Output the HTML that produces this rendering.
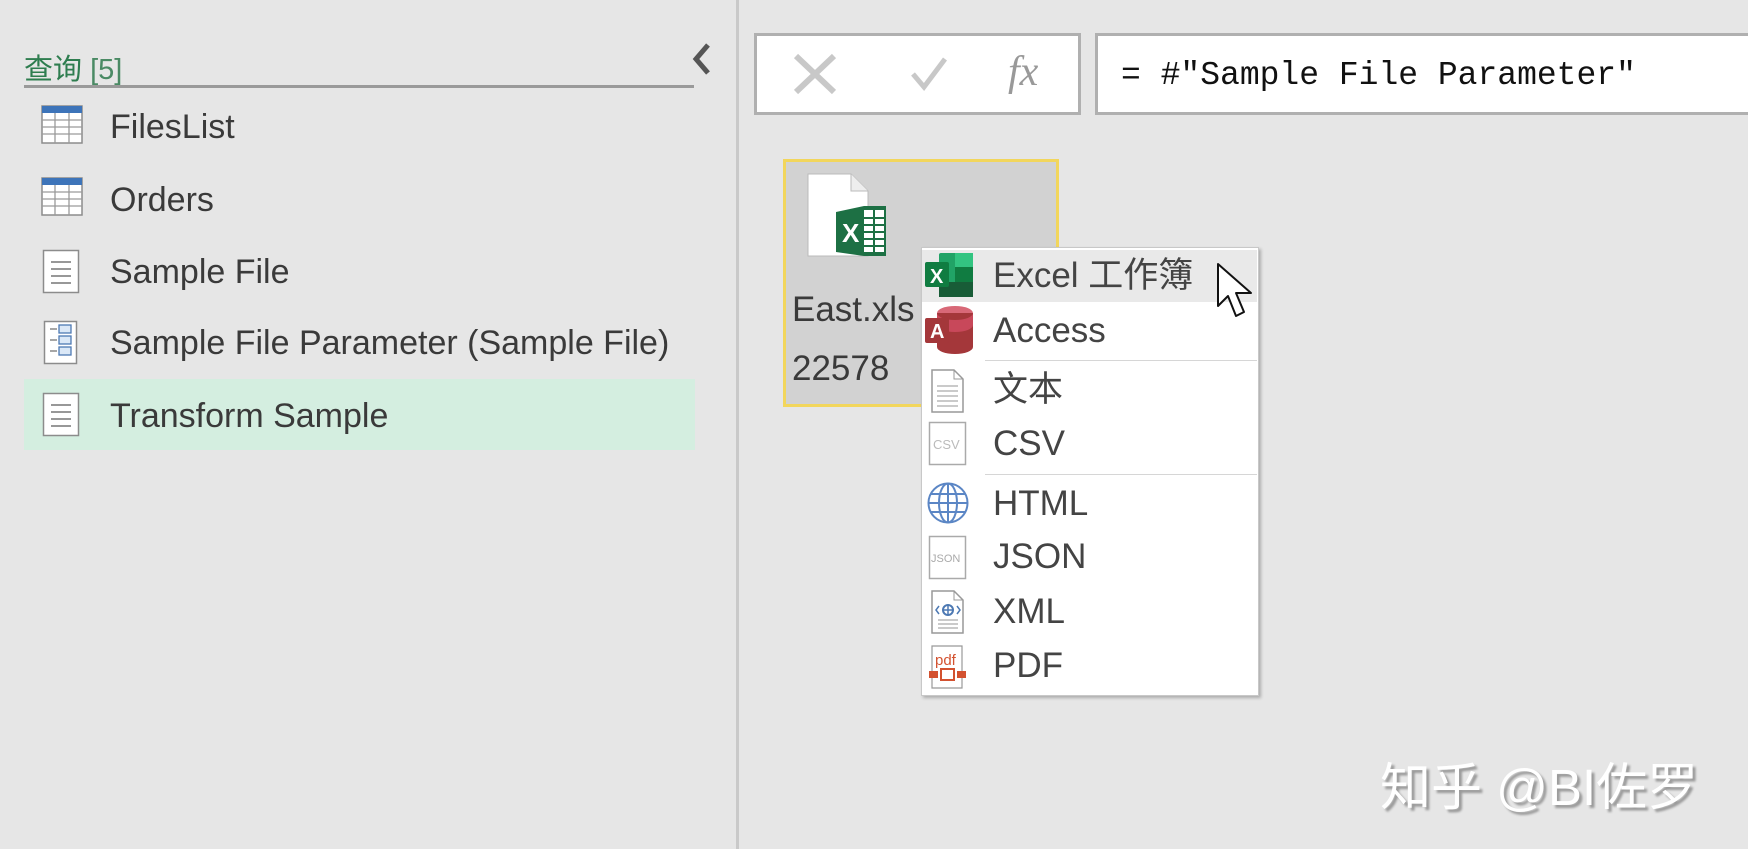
<!DOCTYPE html>
<html><head><meta charset="utf-8"><style>
*{margin:0;padding:0;box-sizing:border-box}
body{width:1748px;height:849px;background:#e6e6e6;position:relative;overflow:hidden;font-family:"Segoe UI","Liberation Sans","Noto Sans CJK SC",sans-serif;color:#3c3c3c}
.a{position:absolute}
.item{position:absolute;left:110px;font-size:34px;line-height:40px;white-space:nowrap;color:#3a3a3a}
.mi{position:absolute;left:993px;font-size:35px;line-height:40px;color:#444;white-space:nowrap}
</style></head><body>
<div class="a" style="left:24px;top:46px;font-size:29px;color:#2e7d4f;font-family:'Liberation Sans','Noto Sans CJK SC',sans-serif">查询 <span style="color:#4a8a64">[5]</span></div>
<div class="a" style="left:24px;top:85px;width:670px;height:3px;background:#9a9a9a"></div>
<svg class="a" style="left:690px;top:42px" width="24" height="34" viewBox="0 0 24 34"><path d="M18 3 L6 17 L18 31" stroke="#555" stroke-width="5" fill="none"/></svg>
<div class="a" style="left:736px;top:0;width:3px;height:849px;background:#c9c9c9"></div>
<div class="a" style="left:24px;top:379px;width:671px;height:71px;background:#d4eee0"></div>

<svg class="a" style="left:41px;top:105px" width="42" height="40" viewBox="0 0 42 40"><rect x="1" y="1" width="40" height="37" fill="#fff" stroke="#8c8c8c" stroke-width="1.5"/><rect x="1" y="1" width="40" height="7" fill="#3d74b9"/><path d="M1 15H41M1 22H41M1 29H41M14 8V38M28 8V38" stroke="#9a9a9a" stroke-width="1.3"/></svg>
<div class="item" style="top:107px">FilesList</div>
<svg class="a" style="left:41px;top:177px" width="42" height="40" viewBox="0 0 42 40"><rect x="1" y="1" width="40" height="37" fill="#fff" stroke="#8c8c8c" stroke-width="1.5"/><rect x="1" y="1" width="40" height="7" fill="#3d74b9"/><path d="M1 15H41M1 22H41M1 29H41M14 8V38M28 8V38" stroke="#9a9a9a" stroke-width="1.3"/></svg>
<div class="item" style="top:180px">Orders</div>
<svg class="a" style="left:42px;top:249px" width="38" height="46" viewBox="0 0 38 46"><rect x="1.5" y="1.5" width="35" height="42" fill="#fff" stroke="#8c8c8c" stroke-width="1.5"/><path d="M9 13H29M9 20H29M9 27H29M9 34H29" stroke="#777" stroke-width="1.5"/></svg>
<div class="item" style="top:252px">Sample File</div>
<svg class="a" style="left:43px;top:320px" width="36" height="46" viewBox="0 0 36 46"><rect x="1.5" y="1.5" width="32" height="42" fill="#fff" stroke="#8c8c8c" stroke-width="1.5"/><path d="M7 9H14M7 20H14M7 31H14" stroke="#888" stroke-width="1.5"/><rect x="16" y="5" width="12" height="8" fill="#dbe8f7" stroke="#4d79b3" stroke-width="1.3"/><rect x="16" y="16" width="12" height="8" fill="#dbe8f7" stroke="#4d79b3" stroke-width="1.3"/><rect x="16" y="27" width="12" height="8" fill="#dbe8f7" stroke="#4d79b3" stroke-width="1.3"/></svg>
<div class="item" style="top:323px">Sample File Parameter (Sample File)</div>
<svg class="a" style="left:42px;top:392px" width="38" height="46" viewBox="0 0 38 46"><rect x="1.5" y="1.5" width="35" height="42" fill="#fff" stroke="#8c8c8c" stroke-width="1.5"/><path d="M9 13H29M9 20H29M9 27H29M9 34H29" stroke="#777" stroke-width="1.5"/></svg>
<div class="item" style="top:396px">Transform Sample</div>

<div class="a" style="left:754px;top:33px;width:327px;height:82px;background:#fff;border:3px solid #b0b0b0"></div>
<svg class="a" style="left:792px;top:52px" width="46" height="44" viewBox="0 0 46 44"><path d="M4 4L42 40M42 4L4 40" stroke="#c8c8c8" stroke-width="6"/></svg>
<svg class="a" style="left:910px;top:54px" width="38" height="38" viewBox="0 0 38 38"><path d="M3 20L14 33L35 5" stroke="#c8c8c8" stroke-width="5" fill="none"/></svg>
<div class="a" style="left:1008px;top:48px;font-family:'Liberation Serif',serif;font-style:italic;font-size:42px;color:#999">fx</div>
<div class="a" style="left:1095px;top:33px;width:660px;height:82px;background:#fff;border:3px solid #b0b0b0"></div>
<div class="a" style="left:1121px;top:57px;font-family:'Liberation Mono',monospace;font-size:33px;color:#111;white-space:pre">= #"Sample File Parameter"</div>

<div class="a" style="left:783px;top:159px;width:276px;height:248px;background:#d2d2d2;border:3px solid #f2d65c"></div>
<svg class="a" style="left:806px;top:172px" width="84" height="92" viewBox="0 0 84 92"><path d="M2 2H45L62 19V84H2Z" fill="#fff" stroke="#bbb" stroke-width="1"/><path d="M45 2V19H62" fill="#eee" stroke="#bbb"/><path d="M30 40L58 34H80V84H58L30 80Z" fill="#1d7044"/><rect x="58" y="38" width="20" height="42" fill="#fff"/><path d="M58 46H78M58 53H78M58 60H78M58 67H78M58 74H78M68 38V80" stroke="#1d7044" stroke-width="2"/><text x="36" y="70" font-family="Liberation Sans" font-weight="bold" font-size="26" fill="#fff">X</text></svg>
<div class="a" style="left:792px;top:290px;font-size:35px;color:#3a3a3a">East.xls</div>
<div class="a" style="left:792px;top:349px;font-size:35px;color:#3a3a3a">22578 </div>

<div class="a" style="left:921px;top:247px;width:338px;height:449px;background:#fff;border:1px solid #c8c8c8;box-shadow:2px 2px 3px rgba(0,0,0,.25)"></div>
<div class="a" style="left:922px;top:250px;width:335px;height:52px;background:#e9e9e9"></div>
<div class="a" style="left:985px;top:360px;width:272px;height:1px;background:#d6d6d6"></div>
<div class="a" style="left:985px;top:474px;width:272px;height:1px;background:#d6d6d6"></div>

<svg class="a" style="left:925px;top:253px" width="48" height="44" viewBox="0 0 48 44"><rect x="14" y="0" width="34" height="44" rx="2" fill="#21a366"/><rect x="30" y="0" width="18" height="14" fill="#33c481"/><rect x="30" y="14" width="18" height="15" fill="#107c41"/><rect x="14" y="29" width="34" height="15" fill="#185c37"/><rect x="0" y="9" width="24" height="25" rx="2" fill="#107c41"/><text x="5" y="30" font-family="Liberation Sans" font-weight="bold" font-size="20" fill="#fff">X</text></svg>
<div class="mi" style="top:256px">Excel 工作簿</div>
<svg class="a" style="left:925px;top:305px" width="48" height="50" viewBox="0 0 48 50"><ellipse cx="30" cy="8" rx="18" ry="7" fill="#d86877"/><path d="M12 8V42A18 7 0 0 0 48 42V8Z" fill="#a4373a"/><path d="M12 20A18 7 0 0 0 48 20V8A18 7 0 0 1 12 8Z" fill="#c8485a"/><rect x="0" y="13" width="24" height="25" rx="2" fill="#a4373a"/><text x="5" y="33" font-family="Liberation Sans" font-weight="bold" font-size="20" fill="#fff">A</text></svg>
<div class="mi" style="top:311px">Access</div>
<svg class="a" style="left:930px;top:368px" width="36" height="46" viewBox="0 0 36 46"><path d="M2 2H24L33 11V44H2Z" fill="#fff" stroke="#999" stroke-width="1.5"/><path d="M24 2V11H33" fill="none" stroke="#999"/><path d="M7 18H28M7 23H28M7 28H28M7 33H28M7 38H28" stroke="#aaa" stroke-width="1.3"/></svg>
<div class="mi" style="top:370px">文本</div>
<svg class="a" style="left:928px;top:421px" width="40" height="46" viewBox="0 0 40 46"><rect x="1.5" y="1.5" width="36" height="42" fill="#fff" stroke="#aaa" stroke-width="1.5"/><text x="5" y="28" font-family="Liberation Sans" font-size="13" fill="#bbb">CSV</text></svg>
<div class="mi" style="top:424px">CSV</div>
<svg class="a" style="left:926px;top:481px" width="44" height="44" viewBox="0 0 44 44"><circle cx="22" cy="22" r="19.5" fill="#fff" stroke="#5b86c5" stroke-width="2"/><ellipse cx="22" cy="22" rx="9" ry="19.5" fill="none" stroke="#5b86c5" stroke-width="2"/><path d="M22 2.5V41.5M2.5 22H41.5M5 13H39M5 31H39" stroke="#5b86c5" stroke-width="2"/></svg>
<div class="mi" style="top:484px">HTML</div>
<svg class="a" style="left:928px;top:535px" width="40" height="46" viewBox="0 0 40 46"><rect x="1.5" y="1.5" width="36" height="42" fill="#fff" stroke="#aaa" stroke-width="1.5"/><text x="3" y="27" font-family="Liberation Sans" font-size="11" fill="#aaa">JSON</text></svg>
<div class="mi" style="top:537px">JSON</div>
<svg class="a" style="left:930px;top:589px" width="36" height="46" viewBox="0 0 36 46"><path d="M2 2H24L33 11V44H2Z" fill="#fff" stroke="#999" stroke-width="1.5"/><path d="M24 2V11H33" fill="none" stroke="#999"/><circle cx="18" cy="21" r="5" fill="none" stroke="#4d79b3" stroke-width="2"/><path d="M13 21H23M18 16V26M9 17L6 21L9 25M27 17L30 21L27 25" stroke="#4d79b3" stroke-width="1.5" fill="none"/><path d="M8 31H28M8 35H28M8 39H28" stroke="#aaa" stroke-width="1.2"/></svg>
<div class="mi" style="top:592px">XML</div>
<svg class="a" style="left:928px;top:644px" width="40" height="46" viewBox="0 0 40 46"><path d="M4 2H34V44H4Z" fill="#fff" stroke="#999" stroke-width="1.2"/><text x="7" y="21" font-family="Liberation Sans" font-size="15" fill="#d35230">pdf</text><rect x="1" y="27" width="9" height="7" fill="#d35230"/><rect x="29" y="27" width="9" height="7" fill="#d35230"/><rect x="13" y="25" width="13" height="11" fill="none" stroke="#d35230" stroke-width="2"/></svg>
<div class="mi" style="top:646px">PDF</div>

<svg class="a" style="left:1216px;top:262px" width="40" height="58" viewBox="0 0 40 58"><path d="M2 2V44L12 34L20 54L28 50L20 31H35Z" fill="#fff" stroke="#111" stroke-width="2" stroke-linejoin="round"/></svg>

<div class="a" style="left:1380px;top:746px;font-size:51px;font-family:'Liberation Sans','Noto Sans CJK SC',sans-serif;color:#fff;text-shadow:3px 3px 2px #9a9a9a;white-space:nowrap">知乎 @BI佐罗</div>
</body></html>
